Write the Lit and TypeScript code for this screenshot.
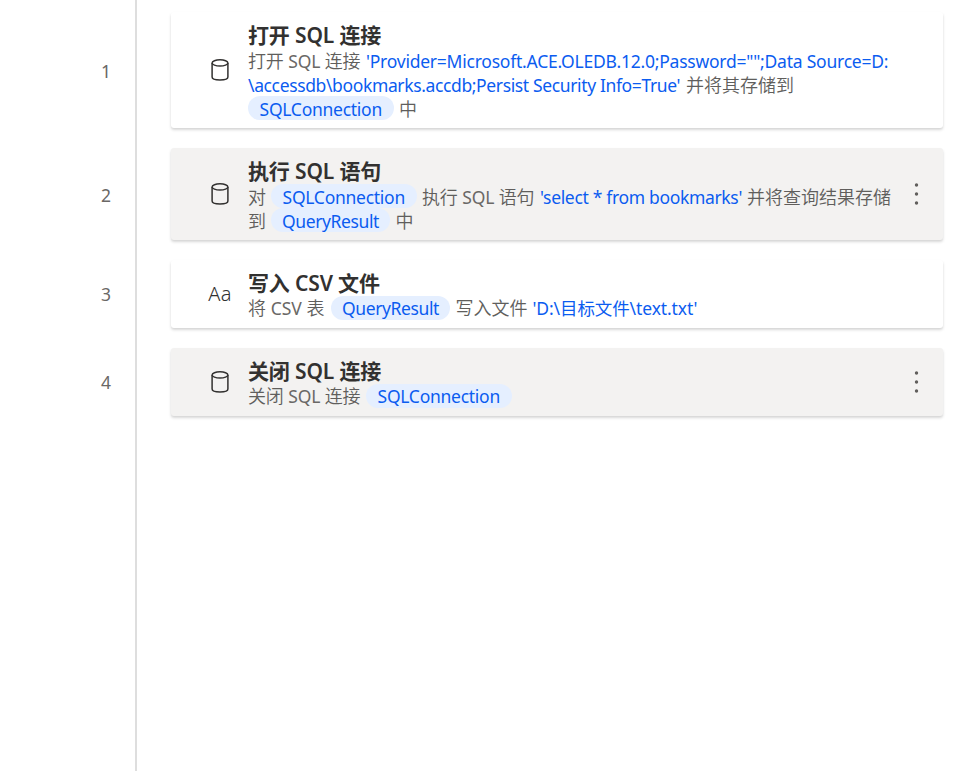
import { LitElement, html, css, svg } from "lit";
import { customElement, property } from "lit/decorators.js";
import { styleMap } from "lit/directives/style-map.js";

type Kind = "text" | "value" | "pill";
interface Segment { kind: Kind; text: string; width: number; track?: number; }
interface Action { icon: "database" | "text"; title: string; menu: boolean; lines: Segment[][]; }

const t = (text: string, width: number, track = 0): Segment => ({ kind: "text", text, width, track });
const v = (text: string, width: number, track = 0): Segment => ({ kind: "value", text, width, track });
const p = (text: string, width: number, track = 0): Segment => ({ kind: "pill", text, width, track });

const ACTIONS: Action[] = [
  { icon: "database", title: "打开 SQL 连接", menu: false, lines: [
    [t("打开 SQL 连接", 118, -0.15), v("'Provider=Microsoft.ACE.OLEDB.12.0;Password=\"\";Data Source=D:", 526, -0.23)],
    [v("\\accessdb\\bookmarks.accdb;Persist Security Info=True'", 438, -0.37), t("并将其存储到", 110)],
    [p("SQLConnection", 145.5, -0.27), t("中", 20)],
  ] },
  { icon: "database", title: "执行 SQL 语句", menu: true, lines: [
    [t("对", 23), p("SQLConnection", 145.5, -0.27), t("执行 SQL 语句", 118, -0.15), v("'select * from bookmarks'", 207, -0.33), t("并将查询结果存储", 145)],
    [t("到", 23), p("QueryResult", 119, -0.4), t("中", 20)],
  ] },
  { icon: "text", title: "写入 CSV 文件", menu: false, lines: [
    [t("将 CSV 表", 83), p("QueryResult", 119, -0.4), t("写入文件", 77), v("'D:\\目标文件\\text.txt'", 170, -0.1)],
  ] },
  { icon: "database", title: "关闭 SQL 连接", menu: true, lines: [
    [t("关闭 SQL 连接", 118, -0.15), p("SQLConnection", 145.5, -0.27)],
  ] },
];

const databaseIcon = svg`<g fill="none" stroke="#323130" stroke-width="1.5">
  <ellipse cx="12" cy="4.9" rx="7.9" ry="3.1"/>
  <path d="M4.1 4.9V19c0 1.8 3.4 3 7.9 3s7.9-1.2 7.9-3V4.9"/></g>`;

@customElement("flow-action")
export class FlowAction extends LitElement {
  @property({ attribute: false }) action!: Action;
  @property({ type: Number }) index = 0;

  static styles = css`
    :host { display: flex; align-items: stretch; }
    .number { width: 136px; padding-right: 25px; box-sizing: border-box; display: flex; align-items: center;
      justify-content: flex-end; font-size: 17.5px; line-height: 24px; color: #6a6866; }
    .digit { padding-top: 2px; }
    .card { margin-left: 35px; width: 772px; box-sizing: border-box; display: flex; align-items: center;
      border-radius: 3px; background: #fff; padding: 8px 17px 0 37px;
      box-shadow: 0 2px 3px rgba(0,0,0,.15), 0 1px 2px rgba(0,0,0,.03); }
    .shaded { background: #f3f2f1; }
    .icon { width: 24px; height: 24px; display: block; flex: none; margin-top: -8px; }
    .letters { width: 24px; flex: none; font-size: 20px; line-height: 28px; font-weight: 300; color: #323130; margin-top: -8px; text-align: center; letter-spacing: 0.4px; }
    .body { align-self: stretch; margin-left: 16px; flex: 1; padding-bottom: 8px; }
    .title { height: 28px; line-height: 30px; font-size: 21px; font-weight: 600; color: #323130; white-space: pre; letter-spacing: -0.15px; }
    .line { display: flex; height: 24px; line-height: 26px; font-size: 18px; white-space: pre; }
    .single .line { line-height: 24px; }
    .single .digit { padding-top: 0; }
    .seg { flex: none; box-sizing: border-box; height: 24px; color: #605e5c; font-weight: 350; }
    .latin { font-weight: 400; font-size: 17.5px; color: #6a6866; }
    .value, .pill { color: #0b5cf0; font-weight: 400; font-size: 17.5px; }
    .pill { border-radius: 12px; background: #e5efff; text-align: center; margin-right: 5.5px; }
    .menu { width: 20px; height: 24px; display: block; flex: none; margin-top: -8px; }
  `;

  private segment(s: Segment) {
    const content = s.kind === "text"
      ? s.text.split(/([A-Z]+)/).map((part) => (/^[A-Z]+$/.test(part) ? html`<span class="latin">${part}</span>` : part))
      : s.text;
    return html`<span class="seg ${s.kind}" style=${styleMap({ width: `${s.width}px`, letterSpacing: `${s.track}px` })}>${content}</span>`;
  }

  render() {
    const a = this.action;
    const size = a.lines.length === 1 ? "single" : "";
    return html`
      <div class="number ${size}"><span class="digit">${this.index}</span></div>
      <div class="card ${size} ${a.menu ? "shaded" : ""}">
        ${a.icon === "database"
          ? html`<svg class="icon" viewBox="0 0 24 24">${databaseIcon}</svg>`
          : html`<div class="letters">Aa</div>`}
        <div class="body">
          <div class="title">${a.title}</div>
          ${a.lines.map((l) => html`<div class="line">${l.map((s) => this.segment(s))}</div>`)}
        </div>
        ${a.menu
          ? html`<svg class="menu" viewBox="0 0 20 24" fill="#605e5c"><circle cx="10.5" cy="3" r="1.7"/><circle cx="10.5" cy="12" r="1.7"/><circle cx="10.5" cy="21" r="1.7"/></svg>`
          : ""}
      </div>`;
  }
}

@customElement("app-root")
export class AppRoot extends LitElement {
  static styles = css`
    :host { display: block; width: 974px; height: 771px; box-sizing: border-box; overflow: hidden;
      font-family: "Noto Sans", "Noto Sans CJK SC", sans-serif;
      background: linear-gradient(90deg, #fff 135px, #dedede 135px, #dedede 137px, #fff 137px); }
    .list { display: flex; flex-direction: column; gap: 20px; padding-top: 12px; }
  `;
  render() {
    return html`<div class="list">${ACTIONS.map((a, i) => html`<flow-action .action=${a} .index=${i + 1}></flow-action>`)}</div>`;
  }
}
